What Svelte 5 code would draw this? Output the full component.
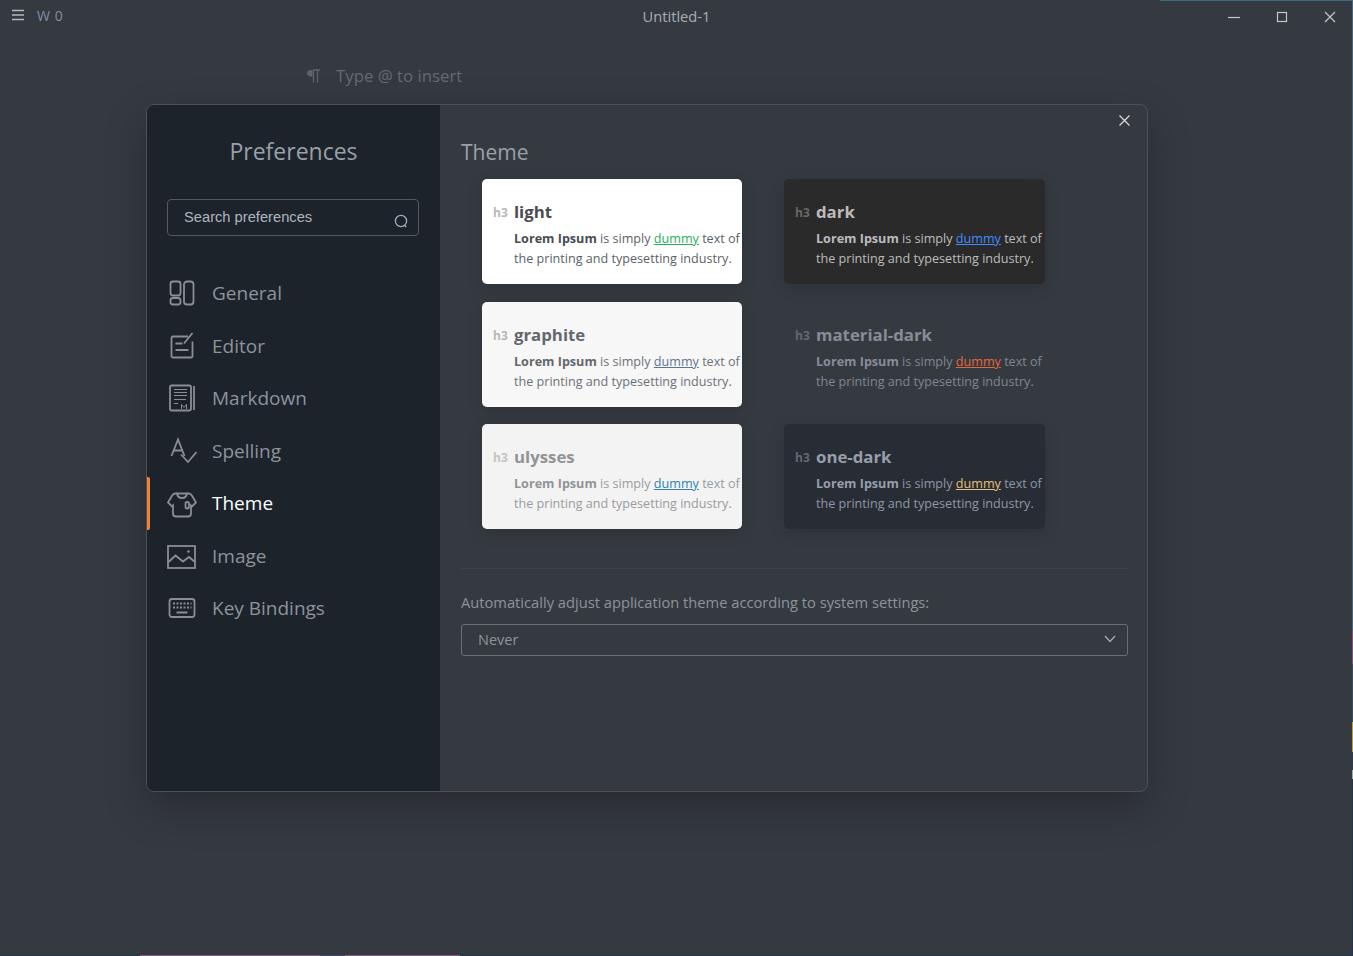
<script>
	const nav = [
		{ name: 'General', icon: 'general' },
		{ name: 'Editor', icon: 'editor' },
		{ name: 'Markdown', icon: 'markdown' },
		{ name: 'Spelling', icon: 'spelling' },
		{ name: 'Theme', icon: 'theme' },
		{ name: 'Image', icon: 'image' },
		{ name: 'Key Bindings', icon: 'keys' }
	];
	const themes = ['light', 'dark', 'graphite', 'material-dark', 'ulysses', 'one-dark'];
	let active = $state('Theme');
</script>

<div class="window">
	<header class="titlebar">
		<div class="left">
			<svg class="menu" width="14" height="12" viewBox="0 0 14 12"><path d="M1 1.500h12M1 6h12M1 10.500h12" /></svg>
			<span class="count">W 0</span>
		</div>
		<span class="title">Untitled-1</span>
		<div class="controls">
			<svg width="12" height="12" viewBox="0 0 12 12"><path d="M0 6.500h12" /></svg>
			<svg width="12" height="12" viewBox="0 0 12 12"><rect x="1.500" y="1.500" width="9" height="9" /></svg>
			<svg width="12" height="12" viewBox="0 0 12 12"><path d="M1 1l10 10M11 1L1 11" /></svg>
		</div>
	</header>

	<div class="editor">
		<svg class="pilcrow" width="15" height="14" viewBox="0 0 15 14">
			<path class="bowl" d="M6.500 1H4.500C2.500 1 1 2.400 1 4.300S2.500 7.500 4.500 7.500h2z" />
			<path d="M7 1h7M7.500 1v12.500M11.500 1v12.500" />
		</svg>
		<span class="placeholder">Type @ to insert</span>
	</div>

	<div class="dialog">
		<aside class="sidebar">
			<h2>Preferences</h2>
			<div class="search">
				<span>Search preferences</span>
				<svg width="16" height="16" viewBox="0 0 16 16"><circle cx="8" cy="8" r="5.600" /><path d="M11.500 12l1.600 2" /></svg>
			</div>
			<nav>
				{#each nav as item}
					<button class="nav-item" class:active={active === item.name} onclick={() => (active = item.name)}>
						<svg class="nav-icon" width="30" height="30" viewBox="0 0 30 30">
							{#if item.icon === 'general'}
								<rect x="3.500" y="3.500" width="10" height="14" rx="2.500" />
								<rect x="3.500" y="20" width="10" height="6.500" rx="2.500" />
								<rect x="17" y="3.500" width="9.500" height="23" rx="3" />
							{:else if item.icon === 'editor'}
								<path d="M21 5.500H6a1.500 1.500 0 0 0-1.500 1.500v18a1.500 1.500 0 0 0 1.500 1.500h18a1.500 1.500 0 0 0 1.500-1.500V10.500" />
								<path d="M8.500 12.500h7M8.500 19h13M17 12.500L25.500 2" />
							{:else if item.icon === 'markdown'}
								<rect x="3" y="2.500" width="21" height="25" rx="1.500" />
								<path d="M27 3v24" />
								<path class="thin" d="M7 6.500h13M7 9.500h13M7 12.500h13M7 16.500h12M7 20.500h4" />
								<path class="thin" d="M14.500 26v-4.500l2.500 3 2.500-3V26" />
							{:else if item.icon === 'spelling'}
								<path d="M4.500 20L11 3.500L17.500 20M7 14.500h8" />
								<path d="M14 18.500l7 7.500L29.500 16" />
							{:else if item.icon === 'theme'}
								<path d="M10 5.500H8C6 5.500 5.500 7 4.500 8.500L1 14.500l4 4 1-1v8a3 3 0 0 0 3 3h12a3 3 0 0 0 3-3v-8l1 1 4-4-3.500-6C24.500 7 24 5.500 22 5.500h-2" />
								<path d="M10 5.500c.5 3 2.500 4.500 5 4.500s4.500-1.500 5-4.500z" />
								<rect x="18.500" y="14" width="3.500" height="6.500" rx="1.700" />
							{:else if item.icon === 'image'}
								<rect x="1" y="1.500" width="27" height="22" transform="translate(0 3.500)" />
								<path d="M1.500 21l7-6.500L16 20.500l6-4.500 6 5" />
								<circle class="dot" cx="21.500" cy="10.500" r="1.300" />
							{:else}
								<rect x="2.500" y="6" width="25" height="18" rx="2.500" />
								<path class="keys" d="M6 10.500h2M9.500 10.500h2M13 10.500h2M16.500 10.500h2M20 10.500h2M23.500 10.500h1M6 14.500h2M9.500 14.500h2M13 14.500h2M16.500 14.500h2M20 14.500h2M23.500 14.500h1M9.500 19.500h11" />
							{/if}
						</svg>
						<span>{item.name}</span>
					</button>
				{/each}
			</nav>
		</aside>

		<main class="panel">
			<button class="close" aria-label="Close">
				<svg width="11" height="11" viewBox="0 0 11 11"><path d="M.5.500l10 10M10.500.500l-10 10" /></svg>
			</button>
			<h3 class="panel-title">Theme</h3>
			<div class="themes">
				{#each themes as theme}
					<div class="card {theme}">
						<div class="card-head"><span class="tag">h3</span><span class="name">{theme}</span></div>
						<p><strong>Lorem Ipsum</strong> is simply <u>dummy</u> text of the printing and typesetting industry.</p>
					</div>
				{/each}
			</div>
			<hr />
			<label class="field-label" for="auto">Automatically adjust application theme according to system settings:</label>
			<div class="select" id="auto">
				<span>Never</span>
				<svg width="12" height="8" viewBox="0 0 12 8"><path d="M1 1l5 5.500L11 1" /></svg>
			</div>
		</main>
	</div>

	<!-- desktop showing behind the window edges -->
	<div class="edge top"></div>
	<div class="edge right"></div>
	<div class="edge bottom"></div>
</div>

<style>
	:global(body) {
		margin: 0;
		background: #353a41;
		overflow: hidden;
	}

	.window {
		position: relative;
		height: 956px;
		overflow: hidden;
		background: #353a41;
		font-family: 'Open Sans', sans-serif;
		color: #9aa0a8;
	}

	.edge {
		position: absolute;
	}
	.edge.top {
		top: 0;
		right: 0;
		width: 193px;
		height: 1px;
		background: #3d6a85;
	}
	.edge.right {
		top: 0;
		right: 0;
		bottom: 0;
		width: 1px;
		background: linear-gradient(
			#3d6a85 0 66%,
			#8a4f78 66% 69.500%,
			#3a4a66 69.500% 75.500%,
			#b89c48 75.500% 78.700%,
			#2e3a50 78.700% 80.500%,
			#8fb0a8 80.500% 81.500%,
			#24344c 81.500%
		);
	}
	.edge.bottom {
		left: 0;
		right: 0;
		bottom: 0;
		height: 1px;
		background: linear-gradient(
			90deg,
			#24344c 0 140px,
			#8a5a80 140px 320px,
			#3c4a70 320px 345px,
			#8a5a80 345px 460px,
			#24344c 460px
		);
	}

	.titlebar {
		display: flex;
		align-items: center;
		justify-content: space-between;
		height: 32px;
		position: relative;
	}
	.left {
		display: flex;
		align-items: center;
		gap: 12px;
		padding-left: 11px;
		margin-top: -2px;
	}
	.menu path {
		stroke: #b5b8bc;
		stroke-width: 1.500;
		fill: none;
	}
	.count {
		font-size: 14px;
		color: #7f8fa3;
		letter-spacing: 0.600px;
	}
	.title {
		position: absolute;
		left: 0;
		right: 0;
		top: 6px;
		text-align: center;
		font-size: 14.700px;
		line-height: 20px;
		color: #a9adb2;
	}
	.controls {
		display: flex;
		gap: 36px;
		padding-right: 17px;
		margin-top: 1px;
	}
	.controls svg * {
		stroke: #c4c6c9;
		stroke-width: 1.200;
		fill: none;
	}

	.editor {
		display: flex;
		align-items: center;
		gap: 15px;
		padding: 32px 0 0 306px;
		font-size: 16.800px;
		line-height: 24px;
		color: #646a72;
	}
	.pilcrow path {
		fill: none;
		stroke: #5f6369;
		stroke-width: 1.300;
	}
	.pilcrow .bowl {
		fill: #5f6369;
		stroke: none;
	}

	.dialog {
		position: absolute;
		left: 146px;
		top: 104px;
		width: 1002px;
		height: 688px;
		box-sizing: border-box;
		display: flex;
		border: 1px solid #4c5158;
		border-radius: 8px;
		overflow: hidden;
		background: #353a41;
		box-shadow: 0 16px 40px rgba(0, 0, 0, 0.25);
	}

	.sidebar {
		width: 293px;
		flex: none;
		background: #1c232b;
		box-sizing: border-box;
	}
	.sidebar h2 {
		margin: 29px 0 0;
		font-size: 23px;
		line-height: 34px;
		font-weight: 400;
		text-align: center;
		color: #9aa0a8;
	}
	.search {
		display: flex;
		align-items: center;
		justify-content: space-between;
		box-sizing: border-box;
		margin: 31px 21px 0 20px;
		height: 37px;
		padding: 0 9px 0 16px;
		border: 1px solid #54585f;
		border-radius: 4px;
		font-family: 'Liberation Sans', Arial, sans-serif;
		font-size: 14.700px;
		color: #aeb6c0;
	}
	.search span {
		margin-top: -2px;
	}
	.search svg {
		margin-top: 6px;
	}
	.search svg * {
		fill: none;
		stroke: #a5adb7;
		stroke-width: 1.300;
	}

	nav {
		display: flex;
		flex-direction: column;
		margin-top: 31.200px;
	}
	.nav-item {
		display: flex;
		align-items: center;
		gap: 15px;
		height: 52.500px;
		padding: 0 0 0 20px;
		border: 0;
		background: none;
		font: inherit;
		font-size: 19px;
		color: #8d939b;
		position: relative;
		text-align: left;
	}
	.nav-item.active {
		color: #fff;
	}
	.nav-item.active::before {
		content: '';
		position: absolute;
		left: 0;
		top: 0;
		width: 3px;
		height: 100%;
		border-radius: 0 2px 2px 0;
		background: #f58232;
	}
	.nav-icon * {
		fill: none;
		stroke: #8b8e92;
		stroke-width: 1.800;
	}
	.nav-icon .thin {
		stroke-width: 1;
	}
	.nav-icon .dot {
		fill: #8b8e92;
		stroke: none;
	}
	.nav-icon .keys {
		stroke-width: 2;
	}

	.panel {
		flex: 1;
		position: relative;
		padding: 0 19px 0 21px;
	}
	.close {
		position: absolute;
		top: 10px;
		right: 17px;
		border: 0;
		padding: 0;
		background: none;
		line-height: 0;
	}
	.close path {
		stroke: #dcdddf;
		stroke-width: 1.200;
		fill: none;
	}
	.panel-title {
		margin: 32px 0 0;
		font-size: 21px;
		line-height: 30px;
		font-weight: 400;
		color: #9aa0a8;
	}

	.themes {
		display: grid;
		grid-template-columns: 260px 261px;
		grid-auto-rows: 105px;
		column-gap: 42px;
		row-gap: 17.500px;
		margin: 12px 0 0 21px;
	}
	.card {
		box-sizing: border-box;
		border-radius: 5px;
		padding: 21px 0 0 32px;
		position: relative;
		font-size: 12.600px;
		line-height: 20px;
		box-shadow: 0 4px 16px rgba(0, 0, 0, 0.14);
	}
	.card-head {
		position: relative;
		font-size: 16.800px;
		line-height: 24px;
		font-weight: 700;
	}
	.tag {
		position: absolute;
		left: -21px;
		top: 1px;
		font-size: 12px;
		font-weight: 700;
		color: #b8b8b8;
	}
	.card p {
		margin: 5px 0 0;
		width: 228px;
	}
	.card strong {
		font-weight: 700;
	}

	.light {
		background: #fff;
		color: #5c5f66;
	}
	.light .name, .light strong {
		color: #4a4c52;
	}
	.light u {
		color: #27ae60;
	}

	.dark {
		background: #2a2a2b;
		color: #bdbdbd;
	}
	.dark .name, .dark strong {
		color: #bcbcbc;
	}
	.dark .tag {
		color: #686868;
	}
	.dark u {
		color: #428bff;
	}

	.graphite {
		background: #f7f7f7;
		color: #6d7177;
	}
	.graphite .name, .graphite strong {
		color: #64676d;
	}
	.graphite u {
		color: #5f7390;
	}

	.material-dark {
		background: transparent;
		box-shadow: none;
		color: #7f8692;
	}
	.material-dark .name, .material-dark strong {
		color: #868c98;
	}
	.material-dark .tag {
		color: #636873;
	}
	.material-dark u {
		color: #e5673c;
	}

	.ulysses {
		background: #f3f3f3;
		color: #9a9c9f;
	}
	.ulysses .name, .ulysses strong {
		color: #929497;
	}
	.ulysses .tag {
		color: #c4c4c4;
	}
	.ulysses u {
		color: #2f82b4;
	}

	.one-dark {
		background: #282c34;
		color: #8f97a6;
	}
	.one-dark .name, .one-dark strong {
		color: #979eac;
	}
	.one-dark .tag {
		color: #636873;
	}
	.one-dark u {
		color: #e5c07b;
	}

	hr {
		border: 0;
		border-top: 1px solid #3e434a;
		margin: 39px 0 0;
	}
	.field-label {
		display: block;
		margin-top: 23px;
		font-size: 14.700px;
		line-height: 20px;
		color: #8d939b;
	}
	.select {
		display: flex;
		align-items: center;
		justify-content: space-between;
		box-sizing: border-box;
		height: 32px;
		margin-top: 12px;
		padding: 0 11px 2px 16px;
		border: 1px solid #6a6f76;
		border-radius: 3px;
		font-size: 14.500px;
		color: #8d939b;
	}
	.select path {
		fill: none;
		stroke: #a8acb2;
		stroke-width: 1.300;
	}
</style>
